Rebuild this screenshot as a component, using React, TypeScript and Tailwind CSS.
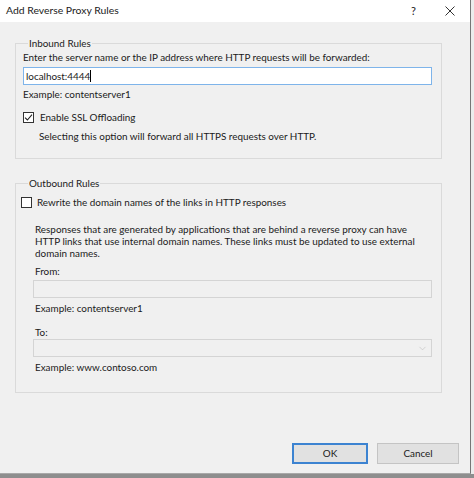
import { ChevronDown } from 'lucide-react'

const font = "font-['Lato',_'Liberation_Sans',_sans-serif] text-[9.9px] text-[#1a1a1a]"

function CheckBox({ checked }: { checked?: boolean }) {
  return (
    <span className="flex h-[11px] w-[11px] shrink-0 items-center justify-center border border-[#333] bg-white">
      {checked && (
        <svg width="9" height="9" viewBox="0 0 9 9" fill="none">
          <path d="M1 4.6 L3.4 7 L8 1.6" stroke="#222" strokeWidth="1.1" />
        </svg>
      )}
    </span>
  )
}

function Button({ label, primary }: { label: string; primary?: boolean }) {
  return (
    <button
      className={
        primary
          ? 'h-[21px] w-[76px] border-2 border-[#3c83d1] bg-[#e1e1e1] leading-[17px]'
          : 'h-[21px] w-[82px] border border-[#c4c4c4] bg-[#e1e1e1] leading-[19px]'
      }
    >
      {label}
    </button>
  )
}

export default function App() {
  return (
    <div className={`flex h-[478px] w-[474px] flex-col bg-[#8e8e8e] ${font}`}>
      <div className="flex h-[474px]">
        <div className="flex w-[471px] flex-col border-r border-b border-r-[#767676] border-b-[#a9a9a9] bg-[#f0f0f0]">
          {/* title bar */}
          <div className="flex h-[22px] shrink-0 items-center bg-white pl-[6px] text-[10.4px]">
            <span>Add Reverse Proxy Rules</span>
            <span className="ml-auto mr-[29px] text-[11px]">?</span>
            <svg width="10" height="10" viewBox="0 0 10 10" className="mr-[15px]">
              <path d="M0.5 0.5 L9.5 9.5 M9.5 0.5 L0.5 9.5" stroke="#333" strokeWidth="1" />
            </svg>
          </div>

          <div className="flex flex-1 flex-col pl-[15px] pr-[28px] pt-[14px]">
            {/* inbound */}
            <fieldset className="min-w-0 border border-[#dadada] pb-[15px] pl-[7px] pr-[9px]">
              <legend className="ml-[5px] px-[1px] leading-[14px]">Inbound Rules</legend>
              <p className="leading-[14px]">Enter the server name or the IP address where HTTP requests will be forwarded:</p>
              <div className="mt-[3px] flex h-[18px] items-center border border-[#7eb4ea] bg-white pl-[2px]">
                <span>localhost:4444</span>
                <span className="h-[12px] w-px bg-black" />
              </div>
              <p className="mt-[2px] leading-[14px]">Example: contentserver1</p>
              <div className="mt-[9px] flex h-[14px] items-center gap-[6px]">
                <CheckBox checked />
                <span>Enable SSL Offloading</span>
              </div>
              <p className="mt-[5px] pl-[16px] leading-[14px]">Selecting this option will forward all HTTPS requests over HTTP.</p>
            </fieldset>

            {/* outbound */}
            <fieldset className="mt-[17px] min-w-0 border border-[#dadada] pb-[18px] pl-[7px] pr-[9px]">
              <legend className="ml-[5px] px-[1px] leading-[14px]">Outbound Rules</legend>
              <div className="mt-[5px] -ml-[2px] flex h-[14px] items-center gap-[5px]">
                <CheckBox />
                <span>Rewrite the domain names of the links in HTTP responses</span>
              </div>
              <div className="pl-[12px]">
                <p className="mt-[15px] whitespace-nowrap leading-[11.8px]">
                  Responses that are generated by applications that are behind a reverse proxy can have
                  <br />
                  HTTP links that use internal domain names. These links must be updated to use external
                  <br />
                  domain names.
                </p>
                <p className="mt-[5px] leading-[14px]">From:</p>
              </div>
              <div className="ml-[10px] mt-[2px] h-[18px] border border-[#d4d4d4] bg-[#f0f0f0]" />
              <p className="mt-[3px] pl-[12px] leading-[14px]">Example: contentserver1</p>
              <p className="mt-[10px] pl-[12px] leading-[14px]">To:</p>
              <div className="ml-[10px] flex h-[18px] items-center justify-end border border-[#d4d4d4] bg-[#f0f0f0] pr-[3px]">
                <ChevronDown size={11} strokeWidth={1.2} color="#b8b8b8" />
              </div>
              <p className="mt-[3px] pl-[12px] leading-[14px]">Example: www.contoso.com</p>
            </fieldset>

            <div className="-mr-[17px] mt-auto flex justify-end gap-[9px] pb-[9px]">
              <Button label="OK" primary />
              <Button label="Cancel" />
            </div>
          </div>
        </div>
        <div className="flex-1 bg-[#ececec]" />
      </div>
    </div>
  )
}
